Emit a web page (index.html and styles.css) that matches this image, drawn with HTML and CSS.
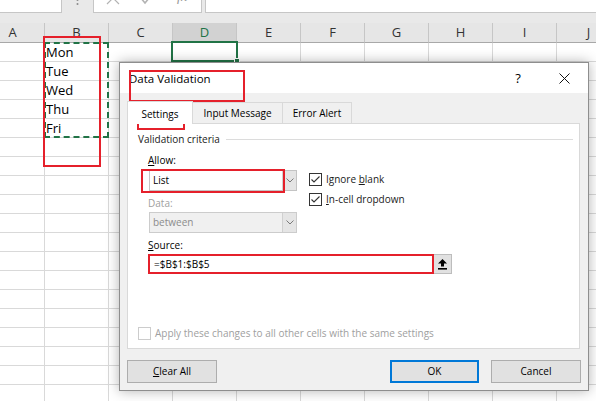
FILE: index.html
```html
<!DOCTYPE html>
<html lang="en">
<head>
    <meta charset="UTF-8">
    <meta name="viewport" content="width=device-width, initial-scale=1.0">
    <title>Data Validation</title>
    <link rel="stylesheet" href="styles.css">
</head>
<body>
    <div class="app">
        <!-- formula bar, only its lower edge shows -->
        <div class="formula-bar">
            <div class="name-box"></div>
            <div class="grip">
                <svg width="3" height="8" viewBox="0 0 3 8"><circle cx="1.5" cy="1" r="1" fill="#8a8a8a"/><circle cx="1.5" cy="5" r="1" fill="#8a8a8a"/></svg>
            </div>
            <div class="fx-box">
                <svg class="fx-icon" width="14" height="12" viewBox="0 0 14 12"><path d="M1 -8 L13 4 M13 -8 L1 4" stroke="#b3b3b3" stroke-width="1.2" fill="none"/></svg>
                <svg class="fx-icon ok" width="14" height="12" viewBox="0 0 14 12"><path d="M0 -3 L5 3 L14 -8" stroke="#b3b3b3" stroke-width="1.6" fill="none"/></svg>
                <span class="fx">fx</span>
            </div>
            <div class="formula-input"></div>
        </div>

        <div class="col-headers">
            <div class="col-head">A</div>
            <div class="col-head">B</div>
            <div class="col-head">C</div>
            <div class="col-head active">D</div>
            <div class="col-head">E</div>
            <div class="col-head">F</div>
            <div class="col-head">G</div>
            <div class="col-head">H</div>
            <div class="col-head">I</div>
            <div class="col-head">J</div>
        </div>

        <div class="grid">
            <div class="cell-list">
                <div>Mon</div>
                <div>Tue</div>
                <div>Wed</div>
                <div>Thu</div>
                <div>Fri</div>
            </div>
        </div>

        <div class="copy-range"></div>
        <div class="selection"><span class="fill-handle"></span></div>

        <!-- Data Validation dialog -->
        <div class="dialog">
            <div class="dialog-title">
                <span class="dialog-caption">Data Validation</span>
                <span class="title-btn help">?</span>
                <span class="title-btn close">
                    <svg width="11" height="11" viewBox="0 0 11 11"><path d="M0.5 0.5 L10.5 10.5 M10.5 0.5 L0.5 10.5" stroke="#111" stroke-width="1" fill="none"/></svg>
                </span>
            </div>
            <div class="dialog-body">
                <div class="tabs">
                    <div class="tab active">Settings</div>
                    <div class="tab tab-input">Input Message</div>
                    <div class="tab tab-error">Error Alert</div>
                </div>
                <div class="tab-panel">
                    <div class="group-title">Validation criteria</div>
                    <div class="criteria">
                        <div class="field-col">
                            <div class="field-label"><u>A</u>llow:</div>
                            <div class="combo">
                                <span class="combo-value">List</span>
                                <span class="combo-arrow">
                                    <svg width="8" height="5" viewBox="0 0 8 5"><path d="M0.5 0.5 L4 4 L7.5 0.5" stroke="#7a7a7a" fill="none"/></svg>
                                </span>
                            </div>
                            <div class="field-label disabled">Data:</div>
                            <div class="combo disabled">
                                <span class="combo-value">between</span>
                                <span class="combo-arrow">
                                    <svg width="8" height="5" viewBox="0 0 8 5"><path d="M0.5 0.5 L4 4 L7.5 0.5" stroke="#7a7a7a" fill="none"/></svg>
                                </span>
                            </div>
                        </div>
                        <div class="check-col">
                            <div class="check">
                                <span class="box"><svg width="11" height="11" viewBox="0 0 11 11"><path d="M1.5 5.5 L4 8 L9.5 2.5" stroke="#333" stroke-width="1.1" fill="none"/></svg></span>
                                <span>Ignore <u>b</u>lank</span>
                            </div>
                            <div class="check">
                                <span class="box"><svg width="11" height="11" viewBox="0 0 11 11"><path d="M1.5 5.5 L4 8 L9.5 2.5" stroke="#333" stroke-width="1.1" fill="none"/></svg></span>
                                <span><u>I</u>n-cell dropdown</span>
                            </div>
                        </div>
                    </div>
                    <div class="field-label source-label"><u>S</u>ource:</div>
                    <div class="source-row">
                        <div class="source-input">=$B$1:$B$5</div>
                        <div class="collapse-btn">
                            <svg width="9" height="11" viewBox="0 0 9 11"><polygon points="4.5,0 0,4.5 3,4.5 3,7.5 6,7.5 6,4.5 9,4.5" fill="#000"/><rect x="0" y="9" width="9" height="1.6" fill="#000"/></svg>
                        </div>
                    </div>
                    <div class="apply-row">
                        <span class="box empty"></span>
                        <span>Apply these changes to all other cells with the same settings</span>
                    </div>
                </div>
                <div class="buttons">
                    <div class="btn clear"><u>C</u>lear All</div>
                    <div class="btn primary">OK</div>
                    <div class="btn">Cancel</div>
                </div>
            </div>
        </div>

        <!-- red highlight boxes -->
        <div class="mark mark-days"></div>
        <div class="mark mark-title"></div>
        <div class="mark mark-tab"></div>
        <div class="mark mark-allow"></div>
        <div class="mark mark-source"></div>
    </div>
</body>
</html>
```

FILE: styles.css
```css
/* Global */
* {
    box-sizing: border-box;
}

body {
    margin: 0;
    font-family: 'Open Sans', sans-serif;
    background-color: #fff;
    color: #000;
}

.app {
    position: relative;
    width: 596px;
    height: 401px;
    overflow: hidden;
}

/* Formula bar */
.formula-bar {
    display: flex;
    height: 23px;
    background-color: #e9e9e9;
}

.name-box {
    width: 62px;
    height: 13px;
    background-color: #fff;
    border-right: 1px solid #c6c6c6;
    border-bottom: 1px solid #c6c6c6;
}

.grip {
    width: 31px;
    padding-left: 14px;
    height: 8px;
    overflow: hidden;
}

.grip svg {
    display: block;
    margin-top: -1px;
}

.fx-box {
    display: flex;
    width: 109px;
    height: 13px;
    padding-left: 12px;
    background-color: #fff;
    border: 1px solid #c6c6c6;
    border-top: none;
    overflow: hidden;
}

.fx-icon {
    display: block;
    margin-right: 20px;
}

.fx-icon.ok {
    margin-right: 23px;
}

.fx {
    font-family: 'Liberation Serif', serif;
    font-style: italic;
    font-size: 14px;
    line-height: 14px;
    color: #9a9a9a;
    margin-top: -10px;
}

.formula-input {
    flex: 1;
    height: 13px;
    margin-left: 3px;
    background-color: #fff;
    border-left: 1px solid #c6c6c6;
    border-bottom: 1px solid #c6c6c6;
}

/* Column headers */
.col-headers {
    display: flex;
    height: 20px;
    margin-left: -19px;
    background-color: #e6e6e6;
}

.col-head {
    flex: none;
    width: 64px;
    height: 20px;
    border-right: 1px solid #c6c6c6;
    border-bottom: 1px solid #a8a8a8;
    text-align: center;
    font-size: 13px;
    line-height: 19px;
    color: #333;
}

.col-head.active {
    background-color: #d2d2d2;
    color: #217346;
}

/* Cells */
.grid {
    height: 358px;
    background-image:
        linear-gradient(90deg, #d9d9d9 1px, transparent 1px),
        linear-gradient(180deg, transparent 18px, #d9d9d9 18px);
    background-size: 64px 19px, 100% 19px;
    background-position: 44px 0, 0 0;
}

.cell-list {
    padding-left: 46px;
    font-size: 13px;
    line-height: 19px;
}

.selection {
    position: absolute;
    left: 171px;
    top: 41px;
    width: 67px;
    height: 21px;
    border: 2px solid #217346;
}

.fill-handle {
    position: absolute;
    right: -4px;
    bottom: -4px;
    width: 6px;
    height: 6px;
    background-color: #217346;
    border: 1px solid #fff;
}

.copy-range {
    position: absolute;
    left: 44px;
    top: 42px;
    width: 65px;
    height: 96px;
    border: 2px dashed #217346;
}

/* Dialog */
.dialog {
    position: absolute;
    left: 119px;
    top: 62px;
    width: 470px;
    height: 329px;
    background-color: #f0f0f0;
    border: 1px solid #8e8e8e;
    box-shadow: 0 0 12px rgba(0, 0, 0, 0.3);
    font-size: 10px;
}

.dialog-title {
    display: flex;
    align-items: center;
    height: 30px;
    padding-left: 9px;
    background-color: #fff;
}

.dialog-caption {
    flex: 1;
    font-size: 11.5px;
}

.title-btn {
    width: 30px;
    text-align: center;
    font-size: 13px;
}

.title-btn svg {
    display: block;
    margin: 0 auto;
}

.help {
    margin-right: 16px;
}

.close {
    margin-right: 9px;
}

.dialog-body {
    padding: 8px 7px 0;
}

/* Tabs */
.tabs {
    display: flex;
    align-items: flex-end;
}

.tab {
    height: 21px;
    border: 1px solid #d9d9d9;
    border-bottom: none;
    background-color: #f0f0f0;
    text-align: center;
    line-height: 20px;
}

.tab.active {
    position: relative;
    z-index: 1;
    width: 66px;
    height: 23px;
    margin-bottom: -1px;
    background-color: #fff;
    line-height: 24px;
}

.tab-input {
    width: 91px;
    margin-left: -1px;
}

.tab-error {
    width: 70px;
    margin-left: -1px;
}

.tab-panel {
    width: 453px;
    height: 226px;
    padding: 8px 6px 0 10px;
    background-color: #fff;
    border: 1px solid #d9d9d9;
}

.group-title {
    display: flex;
    align-items: center;
    line-height: 14px;
    color: #1a1a1a;
}

.group-title::after {
    content: '';
    flex: 1;
    height: 1px;
    margin-left: 6px;
    background-color: #dcdcdc;
}

.criteria {
    display: flex;
    margin-top: 7px;
    padding-left: 10px;
}

.field-col {
    width: 149px;
}

.field-label {
    line-height: 14px;
}

.field-label.disabled {
    margin-top: 5px;
    color: #a0a0a0;
}

.combo {
    display: flex;
    height: 21px;
    margin-top: 3px;
    margin-left: 1px;
    background-color: #fff;
    border: 1px solid #c4c4c4;
}

.combo.disabled {
    margin-top: 2px;
    background-color: #f0f0f0;
    border-color: #cccccc;
    color: #8c8c8c;
}

.combo-value {
    flex: 1;
    padding-left: 3px;
    line-height: 19px;
}

.combo-arrow {
    display: flex;
    align-items: center;
    justify-content: center;
    width: 14px;
    background-color: #e5e5e5;
    border-left: 1px solid #d0d0d0;
}

.check-col {
    padding-top: 19px;
    padding-left: 12px;
}

.check {
    display: flex;
    align-items: center;
    height: 20px;
    margin-top: -3px;
    margin-bottom: 3px;
    color: #1a1a1a;
}

.box {
    display: inline-flex;
    align-items: center;
    justify-content: center;
    width: 13px;
    height: 13px;
    margin-right: 4px;
    background-color: #fff;
    border: 1px solid #333;
}

.box.empty {
    border-color: #cccccc;
}

.source-label {
    margin-top: 5px;
    margin-left: 10px;
}

.source-row {
    display: flex;
    height: 20px;
    margin-top: 2px;
    margin-left: 10px;
}

.source-input {
    width: 286px;
    padding-left: 5px;
    line-height: 18px;
    background-color: #fff;
    border: 1px solid #7a7a7a;
}

.collapse-btn {
    display: flex;
    align-items: center;
    justify-content: center;
    width: 18px;
    background-color: #e1e1e1;
    border: 1px solid #bdbdbd;
    border-left: none;
}

.apply-row {
    display: flex;
    align-items: center;
    margin-top: 52px;
    color: #a0a0a0;
}

/* Buttons */
.buttons {
    display: flex;
    padding-top: 11px;
}

.btn {
    width: 90px;
    height: 23px;
    margin-left: 12px;
    background-color: #e1e1e1;
    border: 1px solid #adadad;
    text-align: center;
    line-height: 21px;
}

.btn.clear {
    margin-left: 0;
    margin-right: auto;
}

.btn.primary {
    width: 89px;
    border-color: #0078d7;
    box-shadow: inset 0 0 0 1px #0078d7;
}

/* Red highlight boxes */
.mark {
    position: absolute;
    border: 2px solid #e5202b;
}

.mark-days {
    left: 43px;
    top: 36px;
    width: 58px;
    height: 131px;
}

.mark-title {
    left: 129px;
    top: 70px;
    width: 116px;
    height: 32px;
}

.mark-tab {
    left: 137px;
    top: 103px;
    width: 48px;
    height: 27px;
}

.mark-allow {
    left: 141px;
    top: 169px;
    width: 144px;
    height: 24px;
}

.mark-source {
    left: 148px;
    top: 254px;
    width: 286px;
    height: 20px;
}
```
